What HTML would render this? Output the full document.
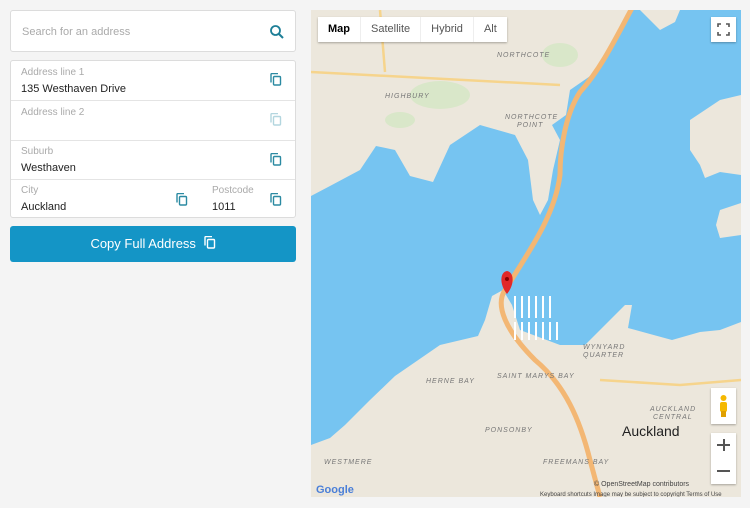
<!DOCTYPE html>
<html><head><meta charset="utf-8"><style>
*{box-sizing:border-box;margin:0;padding:0}
body{width:750px;height:508px;background:#f4f4f4;font-family:"Liberation Sans",Arial,sans-serif;position:relative;overflow:hidden}
.search{position:absolute;left:10px;top:10px;width:286px;height:42px;background:#fff;border:1px solid #dcdcdc;border-radius:3px}
.search span{position:absolute;left:11px;top:15px;font-size:11px;color:#aaa}
.card{position:absolute;left:10px;top:60px;width:286px;height:158px;background:#fff;border:1px solid #dcdcdc;border-radius:3px}
.row{position:absolute;left:0;width:284px;height:40px;border-bottom:1px solid #e4e4e4}
.lab{position:absolute;top:6px;font-size:10px;color:#aaa}
.val{position:absolute;top:22px;font-size:11px;color:#222}
.ic{position:absolute;width:12px;height:13px}
.btn{position:absolute;left:10px;top:226px;width:286px;height:36px;background:#1495c6;border-radius:3px;color:#fff;font-size:13px;text-align:center;line-height:36px}
.map{position:absolute;left:311px;top:10px;width:430px;height:487px;overflow:hidden;background:#76c4f1}
.tabs{position:absolute;left:7px;top:7px;height:25px;background:#fff;display:flex;font-size:11px;box-shadow:0 1px 2px rgba(0,0,0,.3)}
.tabs div{padding:0 10px;line-height:25px;color:#555;border-right:1px solid #eee}
.ctl{position:absolute;background:#fff;box-shadow:0 1px 2px rgba(0,0,0,.3)}
</style></head><body>
<div class="search"><span>Search for an address</span>
<svg style="position:absolute;left:258px;top:13px" width="16" height="16" viewBox="0 0 16 16"><circle cx="6.5" cy="6.5" r="4.5" fill="none" stroke="#1e7f97" stroke-width="1.8"/><path d="M10 10l4 4" stroke="#1e7f97" stroke-width="2"/></svg></div>
<div class="card">
<div class="row" style="top:0"><span class="lab" style="left:10px">Address line 1</span><span class="val" style="left:10px">135 Westhaven Drive</span></div>
<div class="row" style="top:40px"><span class="lab" style="left:10px">Address line 2</span></div>
<div class="row" style="top:79px"><span class="lab" style="left:10px">Suburb</span><span class="val" style="left:10px">Westhaven</span></div>
<div class="row" style="top:118px;border:none"><span class="lab" style="left:10px">City</span><span class="val" style="left:10px">Auckland</span><span class="lab" style="left:201px">Postcode</span><span class="val" style="left:201px">1011</span></div>
</div>
<svg width="0" height="0" style="position:absolute"><defs><g id="cp"><rect x="3.5" y="3.5" width="7" height="8.5" rx="1" fill="none" stroke-width="1.4"/><path d="M1 9.5V1.5a1 1 0 0 1 1-1h6" fill="none" stroke-width="1.4"/></g></defs></svg>
<svg class="ic" style="left:270px;top:73px" viewBox="0 0 12 13" stroke="#2b8aa2"><use href="#cp"/></svg>
<svg class="ic" style="left:270px;top:113px" viewBox="0 0 12 13" stroke="#b3d6df"><use href="#cp"/></svg>
<svg class="ic" style="left:270px;top:153px" viewBox="0 0 12 13" stroke="#2b8aa2"><use href="#cp"/></svg>
<svg class="ic" style="left:176px;top:193px" viewBox="0 0 12 13" stroke="#2b8aa2"><use href="#cp"/></svg>
<svg class="ic" style="left:270px;top:193px" viewBox="0 0 12 13" stroke="#2b8aa2"><use href="#cp"/></svg>
<div class="btn">Copy Full Address <svg style="vertical-align:-1px;margin-left:4px" width="12" height="13" viewBox="0 0 12 13" stroke="#fff"><use href="#cp"/></svg></div>
<div class="map">
<svg width="430" height="487" viewBox="311 10 430 487" style="position:absolute;left:0;top:0">
<path fill="#ece7dc" d="M311 10H632L612 45L596 72L570 90L566 115L552 125L560 140L553 170L548 200L540 215L533 200L528 160L515 135L480 125L450 145L433 182L410 176L395 150L376 146L360 170L330 186L311 196Z"/>
<path fill="#ece7dc" d="M690 120L720 100L741 95V175L720 172L705 178L700 165L690 150Z"/>
<path fill="#ece7dc" d="M720 210L741 203V235L720 238L716 225Z"/>
<path fill="#ece7dc" d="M311 445L330 438L345 425L370 400L395 376L440 345L478 336L485 320L492 296L503 290L512 305L520 330L560 345L585 345L605 325L625 305L632 305L628 328L650 334L672 340L700 332L720 330L741 322V497H311Z"/>
<path fill="#ece7dc" d="M640 10H680L675 22L660 30Z"/>
<g fill="#d9e7c9"><ellipse cx="440" cy="95" rx="30" ry="14"/><ellipse cx="560" cy="55" rx="18" ry="12"/><ellipse cx="400" cy="120" rx="15" ry="8"/></g>
<path d="M632 8C615 40 600 70 580 92C565 115 560 150 560 175C555 215 530 250 505 290C495 305 505 330 535 360C565 385 580 420 590 460L600 497" fill="none" stroke="#f3b774" stroke-width="5"/>
<path d="M311 72L560 85M600 380L680 385L741 380M380 10L385 72" fill="none" stroke="#f6d48c" stroke-width="2.5"/>
<g stroke="#fff" stroke-width="2"><path d="M515 296V318M522 296V318M529 296V318M536 296V318M543 296V318M550 296V318M515 322V340M522 322V340M529 322V340M536 322V340M543 322V340M550 322V340M557 322V340"/></g>
<g font-style="italic" font-size="7" fill="#777" letter-spacing="1"><text x="497" y="57">NORTHCOTE</text><text x="385" y="98">HIGHBURY</text><text x="505" y="119">NORTHCOTE</text><text x="517" y="127">POINT</text><text x="583" y="349">WYNYARD</text><text x="583" y="357">QUARTER</text><text x="426" y="383">HERNE BAY</text><text x="497" y="378">SAINT MARYS BAY</text><text x="485" y="432">PONSONBY</text><text x="650" y="411">AUCKLAND</text><text x="653" y="419">CENTRAL</text><text x="324" y="464">WESTMERE</text><text x="543" y="464">FREEMANS BAY</text></g>
<text x="622" y="436" font-size="14" fill="#222">Auckland</text>
<text x="594" y="486" font-size="7" fill="#444">© OpenStreetMap contributors</text>
<text x="540" y="496" font-size="6" fill="#444">Keyboard shortcuts    Image may be subject to copyright    Terms of Use</text>
<text x="316" y="493" font-size="11" font-weight="bold" fill="#4a7fd8">Google</text>
<path d="M507 294C499 284 500 272 507 271C514 272 515 284 507 294Z" fill="#e12828"/><circle cx="507" cy="279" r="2" fill="#8a0000"/>
</svg>
<div class="tabs"><div style="color:#000;font-weight:bold">Map</div><div>Satellite</div><div>Hybrid</div><div style="border:none">Alt</div></div>
<div class="ctl" style="left:400px;top:7px;width:25px;height:25px"><svg width="25" height="25"><path d="M7 10V7h3M15 7h3v3M18 15v3h-3M10 18H7v-3" fill="none" stroke="#555" stroke-width="1.6"/></svg></div>
<div class="ctl" style="left:400px;top:378px;width:25px;height:36px"><svg width="25" height="36"><circle cx="12.5" cy="10" r="3" fill="#f5b800"/><rect x="9" y="14" width="7" height="10" rx="2" fill="#f5b800"/><rect x="10" y="23" width="5" height="6" fill="#e0a000"/></svg></div>
<div class="ctl" style="left:400px;top:423px;width:25px;height:51px"><div style="position:absolute;left:6px;top:11px;width:13px;height:2px;background:#555"></div><div style="position:absolute;left:11.5px;top:6px;width:2px;height:12px;background:#555"></div><div style="position:absolute;left:6px;top:37px;width:13px;height:2px;background:#555"></div></div>
</div>
</body></html>
